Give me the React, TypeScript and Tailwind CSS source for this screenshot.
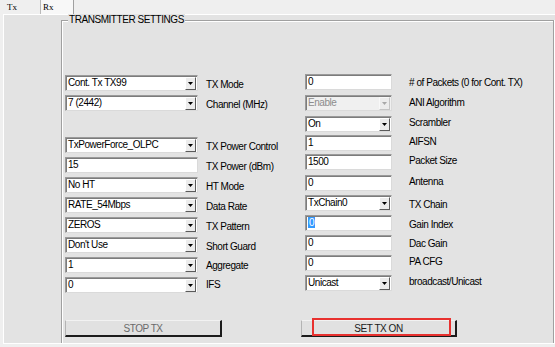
import React from "react";

const font = "font-['Liberation_Sans',Arial,sans-serif] text-[10px] tracking-[-0.45px]";

type Row = {
    value: string;
    label: string;
    kind: "combo" | "edit";
    disabled?: boolean;
    selected?: boolean;
    mt: string;
    lo: string;
};

const leftRows: Row[] = [
    { value: "Cont. Tx TX99", label: "TX Mode", kind: "combo", mt: "mt-0", lo: "mt-[2px]" },
    { value: "7 (2442)", label: "Channel (MHz)", kind: "combo", mt: "mt-[4px]", lo: "mt-[2px]" },
    { value: "TxPowerForce_OLPC", label: "TX Power Control", kind: "combo", mt: "mt-[26px]", lo: "mt-[2px]" },
    { value: "15", label: "TX Power (dBm)", kind: "edit", mt: "mt-[4px]", lo: "mt-[2px]" },
    { value: "No HT", label: "HT Mode", kind: "combo", mt: "mt-[4px]", lo: "mt-[2px]" },
    { value: "RATE_54Mbps", label: "Data Rate", kind: "combo", mt: "mt-[4px]", lo: "mt-[2px]" },
    { value: "ZEROS", label: "TX Pattern", kind: "combo", mt: "mt-[4px]", lo: "mt-[2px]" },
    { value: "Don't Use", label: "Short Guard", kind: "combo", mt: "mt-[4px]", lo: "mt-[2px]" },
    { value: "1", label: "Aggregate", kind: "combo", mt: "mt-[4px]", lo: "mt-[1px]" },
    { value: "0", label: "IFS", kind: "combo", mt: "mt-[4px]", lo: "mt-0" },
];

const rightRows: Row[] = [
    { value: "0", label: "# of Packets (0 for Cont. TX)", kind: "edit", mt: "mt-0", lo: "mt-[1px]" },
    { value: "Enable", label: "ANI Algorithm", kind: "combo", disabled: true, mt: "mt-[5px]", lo: "mt-0" },
    { value: "On", label: "Scrambler", kind: "combo", mt: "mt-[5px]", lo: "-mt-px" },
    { value: "1", label: "AIFSN", kind: "edit", mt: "mt-[3px]", lo: "-mt-px" },
    { value: "1500", label: "Packet Size", kind: "edit", mt: "mt-[3px]", lo: "-mt-px" },
    { value: "0", label: "Antenna", kind: "edit", mt: "mt-[5px]", lo: "-mt-px" },
    { value: "TxChain0", label: "TX Chain", kind: "combo", mt: "mt-[4px]", lo: "mt-[2px]" },
    { value: "0", label: "Gain Index", kind: "edit", selected: true, mt: "mt-[4px]", lo: "mt-[2px]" },
    { value: "0", label: "Dac Gain", kind: "edit", mt: "mt-[4px]", lo: "mt-[1px]" },
    { value: "0", label: "PA CFG", kind: "edit", mt: "mt-[4px]", lo: "-mt-px" },
    { value: "Unicast", label: "broadcast/Unicast", kind: "combo", mt: "mt-[4px]", lo: "-mt-px" },
];

function Arrow({ disabled }: { disabled?: boolean }) {
    return (
        <div
            className={
                disabled
                    ? "w-[11px] h-[13px] mr-px flex items-center justify-center bg-[#ececec] border border-t-[#f8f8f8] border-l-[#f8f8f8] border-b-[#c4c4c4] border-r-[#c4c4c4]"
                    : "w-[11px] h-[13px] mr-px flex items-center justify-center bg-[#ececec] border border-t-white border-l-white border-b-[#5a5a5a] border-r-[#5a5a5a]"
            }
        >
            <svg width="5" height="3" viewBox="0 0 5 3">
                <polygon points="0,0 5,0 2.5,3" fill={disabled ? "#a8a8a8" : "#000"} />
            </svg>
        </div>
    );
}

function Field({ row, width }: { row: Row; width: string }) {
    return (
        <div
            className={`${width} h-4 shrink-0 flex items-center justify-between border border-t-[#9a9a9a] border-l-[#9a9a9a] border-b-[#dadada] border-r-[#dadada] shadow-[inset_1px_1px_0_#7c7c7c] ${
                row.disabled ? "bg-[#f0f0f0] text-[#8d8d8d]" : "bg-white text-black"
            }`}
        >
            <span className="pl-[2px] leading-[14px] whitespace-nowrap">
                {row.selected ? <span className="bg-[#3399ff] text-white px-px">{row.value}</span> : row.value}
            </span>
            {row.kind === "combo" && <Arrow disabled={row.disabled} />}
        </div>
    );
}

function Button({ text, dim }: { text: string; dim?: boolean }) {
    return (
        <div
            className={`h-[17px] flex items-center justify-center bg-[#e1e1e1] border-t border-l border-b-2 border-r-2 border-t-[#f2f2f2] border-l-[#b4b4b4] border-b-[#1c1c1c] border-r-[#1c1c1c] ${
                dim ? "text-[#6a6a6a]" : "text-[#1a1a1a]"
            }`}
        >
            {text}
        </div>
    );
}

export default function App() {
    return (
        <div className={`w-[555px] h-[347px] bg-[#efefef] overflow-hidden ${font}`}>

            {/* TABS */}
            <div className="h-[14px] flex font-['Liberation_Serif',serif] text-[9px] tracking-normal leading-[14px]">
                <div className="w-[41px] pl-[7px] border-r border-[#b9b9b9] text-black">Tx</div>
                <div className="w-[33px] pl-[2px] bg-[#f8f8f8] border-r border-[#a0a0a0] text-black">Rx</div>
            </div>

            {/* PANEL */}
            <div className="ml-[3px] h-[330px] flex flex-col bg-[#e3e3e3] border-l border-t border-b border-white pt-[5px] pl-[57px]">

                {/* GROUP BOX */}
                <div className="relative flex-1 w-[493px] border-t border-l border-r border-[#a0a0a0] shadow-[inset_1px_1px_0_#ffffff,1px_0_0_#ffffff]">
                    <span className="absolute -top-[7px] left-[6px] px-px bg-[#e3e3e3] leading-[12px] text-black">
                        TRANSMITTER SETTINGS
                    </span>

                    <div className="flex">
                        {/* LEFT */}
                        <div className="w-[243px] pl-[3px] pt-[54px] flex flex-col">
                            {leftRows.map((r) => (
                                <div key={r.label} className={`flex h-4 ${r.mt}`}>
                                    <Field row={r} width="w-[133px]" />
                                    <div className={`ml-[8px] h-4 leading-4 whitespace-nowrap text-black ${r.lo}`}>{r.label}</div>
                                </div>
                            ))}
                        </div>

                        {/* RIGHT */}
                        <div className="pt-[53px] flex flex-col">
                            {rightRows.map((r) => (
                                <div key={r.label} className={`flex h-4 ${r.mt}`}>
                                    <Field row={r} width="w-[87px]" />
                                    <div className={`ml-[17px] h-4 leading-4 whitespace-nowrap text-black ${r.lo}`}>{r.label}</div>
                                </div>
                            ))}
                        </div>
                    </div>

                    {/* BUTTONS */}
                    <div className="flex gap-[79px] pl-[3px] mt-[27px]">
                        <div className="w-[157px]">
                            <Button text="STOP TX" dim />
                        </div>
                        <div className="relative w-[156px]">
                            <Button text="SET TX ON" />
                            <div className="absolute -top-[2px] left-[11px] w-[139px] h-[18px] border-2 border-[#e8312f]" />
                        </div>
                    </div>
                </div>
            </div>
        </div>
    );
}
